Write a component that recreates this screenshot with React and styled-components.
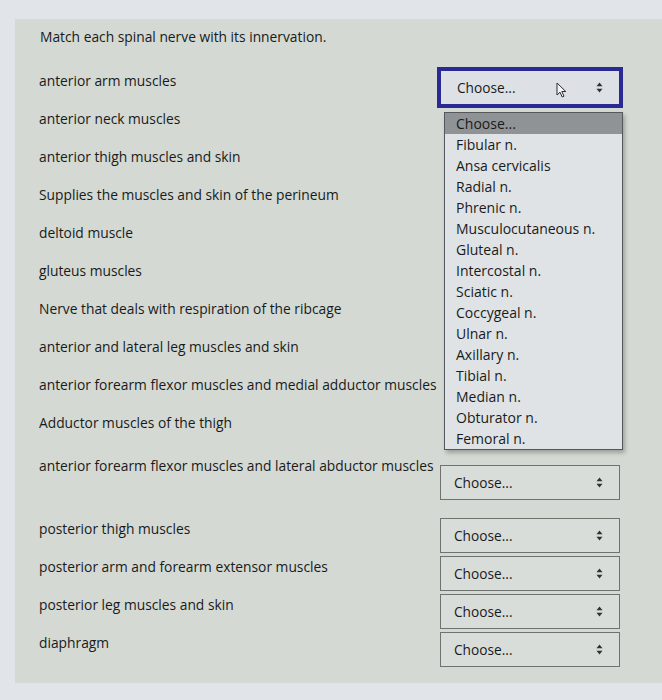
import React from 'react';
import styled, { createGlobalStyle } from 'styled-components';

const GlobalStyle = createGlobalStyle`
	html, body {
		margin: 0;
		padding: 0;
		background-color: #e1e5e9;
	}
	body {
		font-family: 'Open Sans', 'Noto Sans', sans-serif;
		color: #191b1a;
	}
`;

const Page = styled.div`
	width: 662px;
	height: 700px;
	padding-top: 19px;
	box-sizing: border-box;
	overflow: hidden;
`;

const Panel = styled.div`
	margin-left: 15px;
	height: 664px;
	background-color: #d4d9d4;
	padding: 8px 42px 0 24px;
	box-sizing: border-box;
`;

const Question = styled.div`
	font-size: 13.8px;
	line-height: 20px;
	padding-left: 1px;
	margin-bottom: 23px;
`;

const Rows = styled.div`
	display: flex;
	flex-direction: column;
	gap: 3px;
`;

const Row = styled.div`
	display: grid;
	grid-template-columns: 1fr 180px;
	align-items: start;
	margin-top: ${(p) => p.$space || 0}px;
`;

const Label = styled.div`
	font-size: 13.8px;
	line-height: 20px;
	padding-top: 1px;
	margin-top: ${(p) => p.$shift || 0}px;
	white-space: nowrap;
`;

const SelectWrap = styled.div`
	position: relative;
	margin-top: ${(p) => p.$shift || 0}px;
`;

const SelectBox = styled.div`
	height: 35px;
	box-sizing: border-box;
	border: 1px solid #6f7370;
	background-color: #d9ddda;
	display: flex;
	align-items: center;
	justify-content: space-between;
	padding: 0 16px 0 13px;
	font-size: 13.7px;
	visibility: ${(p) => (p.$covered ? 'hidden' : 'visible')};
	outline: ${(p) => (p.$focused ? '3px solid #2b2a94' : 'none')};
	${(p) => p.$focused && 'border-color: #2b2a94; background-color: #dde1e6; padding-left: 16px;'}
`;

const Pointer = styled.svg`
	position: absolute;
	left: 116px;
	top: 12px;
`;

const DropList = styled.div`
	position: absolute;
	top: 42px;
	left: 4px;
	width: 177px;
	background-color: #dfe3e6;
	border: 1px solid #55585a;
	box-shadow: 2px 3px 4px rgba(0, 0, 0, 0.25);
	z-index: 5;
`;

const Option = styled.div`
	height: 21px;
	line-height: 21px;
	font-size: 14px;
	padding-left: 11px;
	background-color: ${(p) => (p.$active ? '#8f9396' : 'transparent')};
	white-space: nowrap;
`;

const Arrows = () => (
	<svg width="7" height="11" viewBox="0 0 7 11">
		<path d="M3.5 0.5 L6.5 4.3 L0.5 4.3 Z" fill="#2f3232" />
		<path d="M3.5 10.5 L6.5 6.7 L0.5 6.7 Z" fill="#2f3232" />
	</svg>
);

const options = [
	'Choose...',
	'Fibular n.',
	'Ansa cervicalis',
	'Radial n.',
	'Phrenic n.',
	'Musculocutaneous n.',
	'Gluteal n.',
	'Intercostal n.',
	'Sciatic n.',
	'Coccygeal n.',
	'Ulnar n.',
	'Axillary n.',
	'Tibial n.',
	'Median n.',
	'Obturator n.',
	'Femoral n.',
];

const items = [
	{ text: 'anterior arm muscles', open: true },
	{ text: 'anterior neck muscles', covered: true },
	{ text: 'anterior thigh muscles and skin', covered: true },
	{ text: 'Supplies the muscles and skin of the perineum', covered: true },
	{ text: 'deltoid muscle', covered: true },
	{ text: 'gluteus muscles', covered: true },
	{ text: 'Nerve that deals with respiration of the ribcage', covered: true },
	{ text: 'anterior and lateral leg muscles and skin', covered: true },
	{ text: 'anterior forearm flexor muscles and medial adductor muscles', covered: true },
	{ text: 'Adductor muscles of the thigh', covered: true },
	{ text: 'anterior forearm flexor muscles and lateral abductor muscles', labelShift: 5, selectShift: 15 },
	{ text: 'posterior thigh muscles', space: 15 },
	{ text: 'posterior arm and forearm extensor muscles' },
	{ text: 'posterior leg muscles and skin' },
	{ text: 'diaphragm' },
];

const MatchRow = ({ text, open, covered, labelShift, selectShift, space }) => (
	<Row $space={space}>
		<Label $shift={labelShift}>{text}</Label>
		<SelectWrap $shift={selectShift}>
			<SelectBox $focused={open} $covered={covered}>
				<span>Choose...</span>
				<Arrows />
			</SelectBox>
			{open && (
				<>
					<Pointer width="11" height="16" viewBox="0 0 11 16">
						<path d="M1 1 L1 13 L4 10.2 L6.2 15 L8 14.2 L5.8 9.5 L9.8 9.5 Z" fill="#f4f5f6" stroke="#2a2c2e" strokeWidth="1" strokeLinejoin="round" />
					</Pointer>
					<DropList>
						{options.map((o, i) => (
							<Option key={o} $active={i === 0}>{o}</Option>
						))}
					</DropList>
				</>
			)}
		</SelectWrap>
	</Row>
);

const App = () => {
	return (
		<Page>
			<GlobalStyle />
			<Panel>
				<Question>Match each spinal nerve with its innervation.</Question>
				<Rows>
					{items.map((item) => (
						<MatchRow key={item.text} {...item} />
					))}
				</Rows>
			</Panel>
		</Page>
	);
};

export default App;
